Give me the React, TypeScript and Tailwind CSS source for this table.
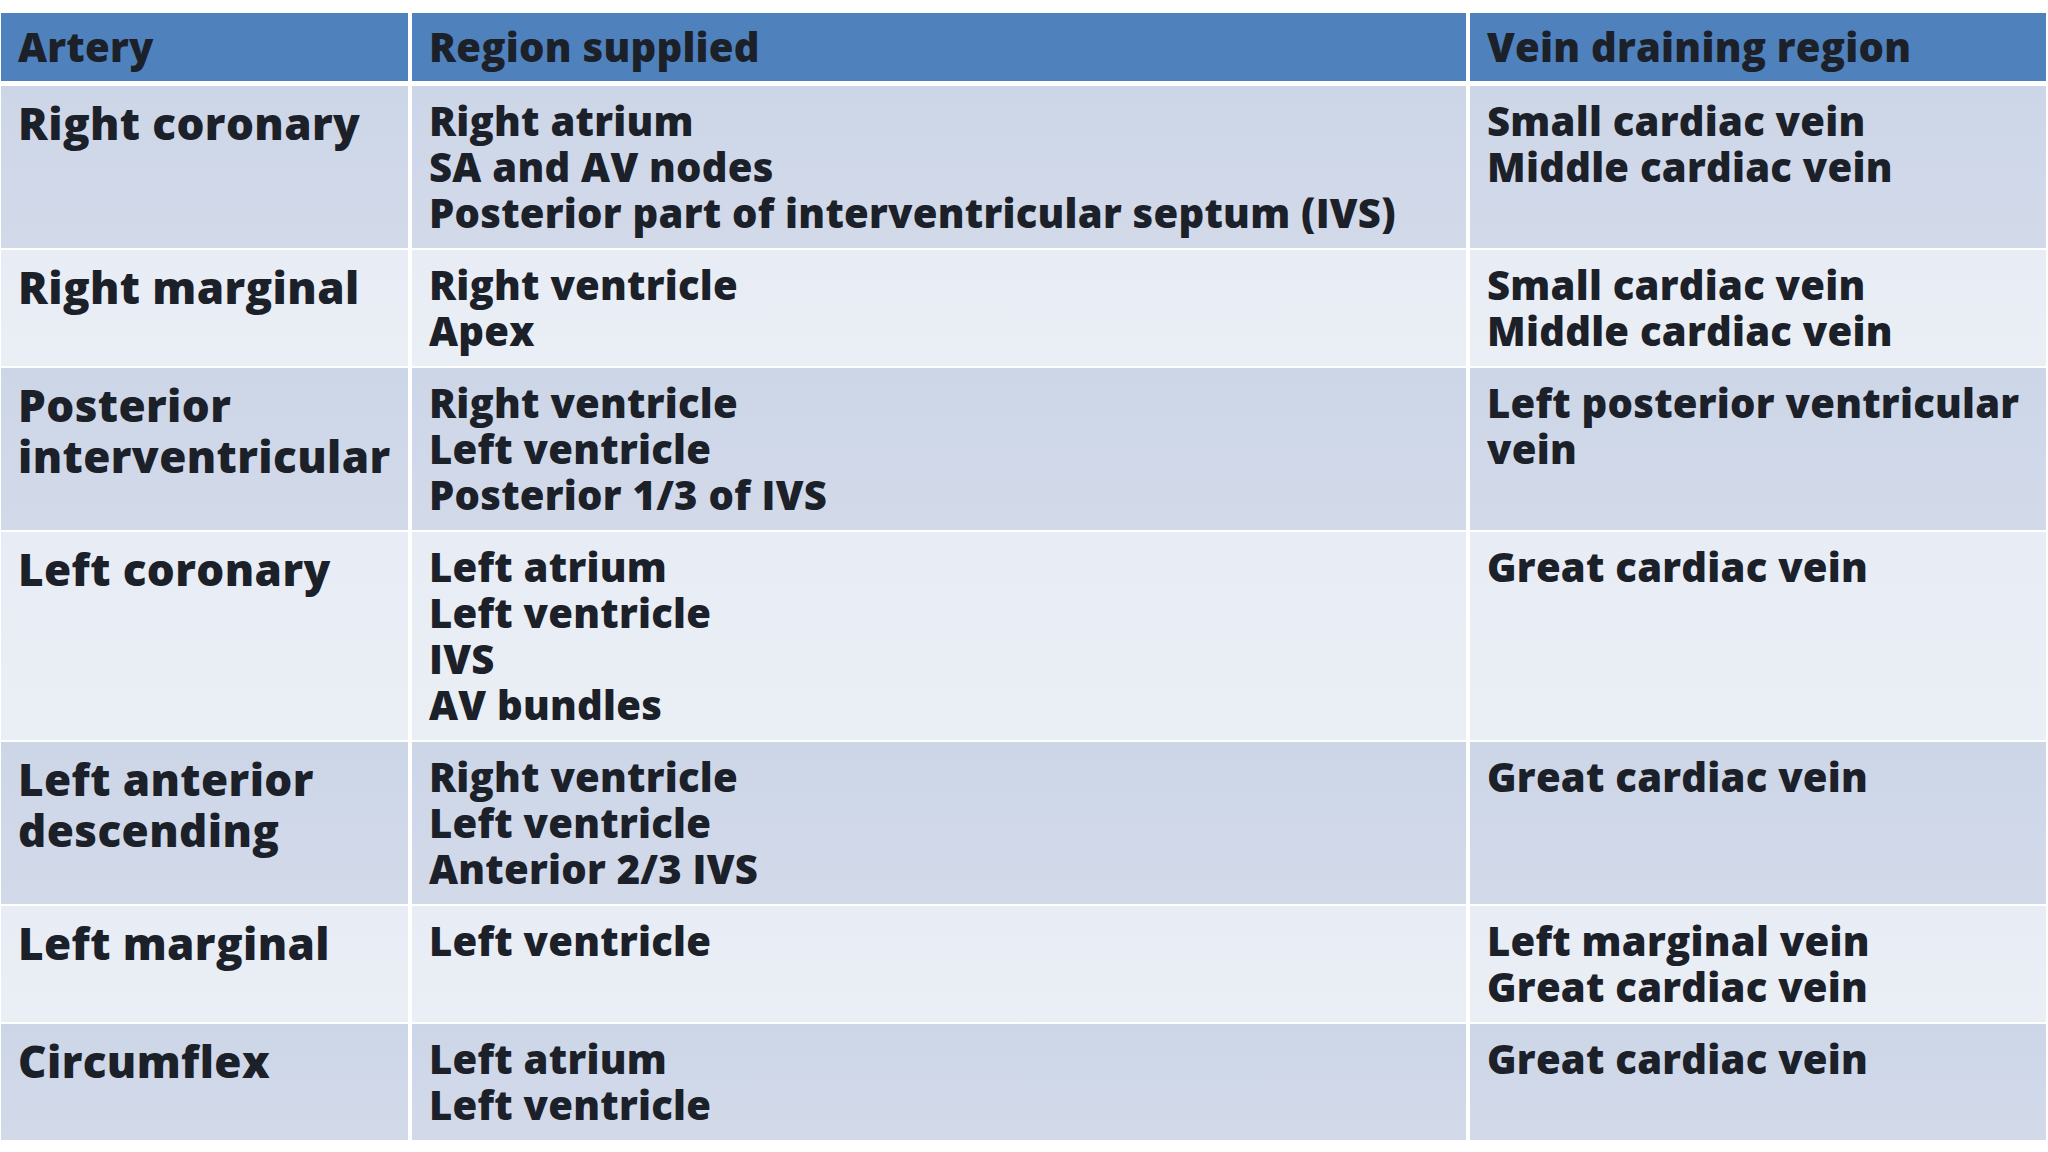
import React from 'react';

// Coronary arteries, the regions they supply and the veins that drain them.
// Laid out like a banded Office-style table: blue header, alternating rows.
// The artery column is set a touch larger than the other two.
type Row = {
  artery: string[];
  regions: string[];
  veins: string[];
};

const rows: Row[] = [
  {
    artery: ['Right coronary'],
    regions: ['Right atrium', 'SA and AV nodes', 'Posterior part of interventricular septum (IVS)'],
    veins: ['Small cardiac vein', 'Middle cardiac vein'],
  },
  {
    artery: ['Right marginal'],
    regions: ['Right ventricle', 'Apex'],
    veins: ['Small cardiac vein', 'Middle cardiac vein'],
  },
  {
    artery: ['Posterior', 'interventricular'],
    regions: ['Right ventricle', 'Left ventricle', 'Posterior 1/3 of IVS'],
    veins: ['Left posterior ventricular', 'vein'],
  },
  {
    artery: ['Left coronary'],
    regions: ['Left atrium', 'Left ventricle', 'IVS', 'AV bundles'],
    veins: ['Great cardiac vein'],
  },
  {
    artery: ['Left anterior', 'descending'],
    regions: ['Right ventricle', 'Left ventricle', 'Anterior 2/3 IVS'],
    veins: ['Great cardiac vein'],
  },
  {
    artery: ['Left marginal'],
    regions: ['Left ventricle'],
    veins: ['Left marginal vein', 'Great cardiac vein'],
  },
  {
    artery: ['Circumflex'],
    regions: ['Left atrium', 'Left ventricle'],
    veins: ['Great cardiac vein'],
  },
];

function Cell({ lines, band, big }: { lines: string[]; band: boolean; big?: boolean }) {
  return (
    <div
      className={`px-[17px] pt-[12px] pb-[12px] mb-[2px] ${
        band ? 'bg-gradient-to-b from-[#cdd6e7] to-[#d2daea]' : 'bg-gradient-to-b from-[#e8ecf4] to-[#eaeef5]'
      } ${big ? 'text-[44px] leading-[51px] tracking-[0.4px]' : ''}`}>
      {lines.map((l) => (
        <div key={l} className="whitespace-nowrap">
          {l}
        </div>
      ))}
    </div>
  );
}

export default function App() {
  return (
    <div
      className="w-[2048px] h-[1152px] overflow-hidden bg-white pt-[13px] pl-[1px] pr-[2px] text-[#1b2029] font-extrabold text-[40px] leading-[46px] tracking-[0.25px]"
      style={{ fontFamily: '"Open Sans", Lato, sans-serif' }}>
      <div className="grid grid-cols-[407px_1054px_1fr] gap-x-[4px]">
        {/* Header */}
        <div className="bg-[#4f81bd] px-[17px] pt-[11px] pb-[11px] mb-[5px]">Artery</div>
        <div className="bg-[#4f81bd] px-[17px] pt-[11px] pb-[11px] mb-[5px]">Region supplied</div>
        <div className="bg-[#4f81bd] px-[17px] pt-[11px] pb-[11px] mb-[5px]">Vein draining region</div>

        {rows.map((r, i) => {
          const band = i % 2 === 0;
          return (
            <React.Fragment key={r.artery.join(' ')}>
              <Cell lines={r.artery} band={band} big />
              <Cell lines={r.regions} band={band} />
              <Cell lines={r.veins} band={band} />
            </React.Fragment>
          );
        })}
      </div>
    </div>
  );
}
